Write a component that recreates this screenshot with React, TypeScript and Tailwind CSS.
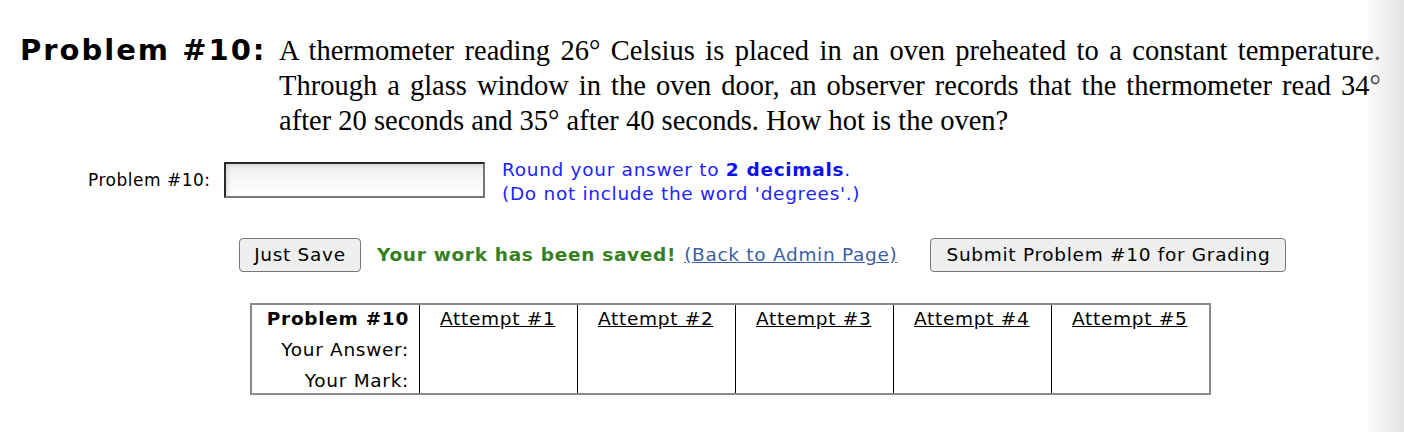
import React from "react";

const sans = { fontFamily: '"DejaVu Sans", Verdana, sans-serif' };

export default function App() {
  const attempts = [1, 2, 3, 4, 5];
  return (
    <div className="relative w-[1404px] h-[432px] bg-white overflow-hidden text-black" style={sans}>
      <div className="pt-[33px] pl-[20px] pr-[23px]">
        <div className="flex items-baseline">
          <div className="font-bold text-[29px] tracking-[2px] leading-[35px] whitespace-nowrap w-[259px] shrink-0">
            Problem #10:
          </div>
          <p className="font-['Liberation_Serif'] text-[28.5px] leading-[35px] text-justify flex-1">
            A thermometer reading 26° Celsius is placed in an oven preheated to a constant temperature. Through a glass window in the oven door, an observer records that the thermometer read 34° after 20 seconds and 35° after 40 seconds. How hot is the oven?
          </p>
        </div>

        <div className="flex items-start mt-[24px]">
          <div className="w-[204px] pl-[68px] text-[17px] tracking-[0.5px] leading-[36px] h-[36px] shrink-0">Problem #10:</div>
          <input
            type="text"
            className="w-[261px] h-[36px] border-2 border-t-[#2a2a2a] border-l-[#2a2a2a] border-r-[#777] border-b-[#777] bg-gradient-to-b from-[#f0f0f0] to-white shadow-[inset_2px_2px_4px_rgba(0,0,0,0.12)] outline-none shrink-0"
          />
          <div className="ml-[17px] text-[#1d24ff] text-[18.5px] tracking-[0.7px] leading-[24px] -mt-[4px]">
            <div>
              Round your answer to <span className="font-bold text-[#0a14e8]">2 decimals</span>.
            </div>
            <div>(Do not include the word 'degrees'.)</div>
          </div>
        </div>

        <div className="flex items-center mt-[32px] pl-[219px] text-[18.5px] tracking-[0.7px]">
          <button className="h-[34px] w-[122px] rounded-[4px] border border-[#777] bg-[#efefef] leading-none text-black">
            Just Save
          </button>
          <span className="ml-[16px] font-bold text-[#35801f]">Your work has been saved!</span>
          <a href="#" className="ml-[8px] text-[#3c5ea6] underline">(Back to Admin Page)</a>
          <button className="ml-[33px] h-[34px] px-[15px] rounded-[4px] border border-[#777] bg-[#efefef] leading-none text-black">
            Submit Problem #10 for Grading
          </button>
        </div>

        <div className="mt-[31px] ml-[230px] w-[961px] border-2 border-[#8a8a8a] grid grid-cols-[168px_158px_158px_158px_158px_1fr] text-[18.5px] tracking-[0.7px]">
          <div className="border-r border-black text-right pr-[10px] pt-[2px]">
            <div className="h-[31px] leading-[24px] font-bold">Problem #10</div>
            <div className="h-[31px] leading-[24px]">Your Answer:</div>
            <div className="h-[24px] leading-[24px]">Your Mark:</div>
          </div>
          {attempts.map((n) => (
            <div key={n} className={n < 5 ? "border-r border-black pt-[2px]" : "pt-[2px]"}>
              <div className="h-[31px] leading-[24px] pl-[20px]">
                <a href="#" className="underline text-black">Attempt #{n}</a>
              </div>
            </div>
          ))}
        </div>
      </div>
      <div className="pointer-events-none absolute right-0 top-0 h-full w-[40px] bg-gradient-to-r from-[rgba(230,230,230,0)] to-[#e2e2e2]" />
    </div>
  );
}
